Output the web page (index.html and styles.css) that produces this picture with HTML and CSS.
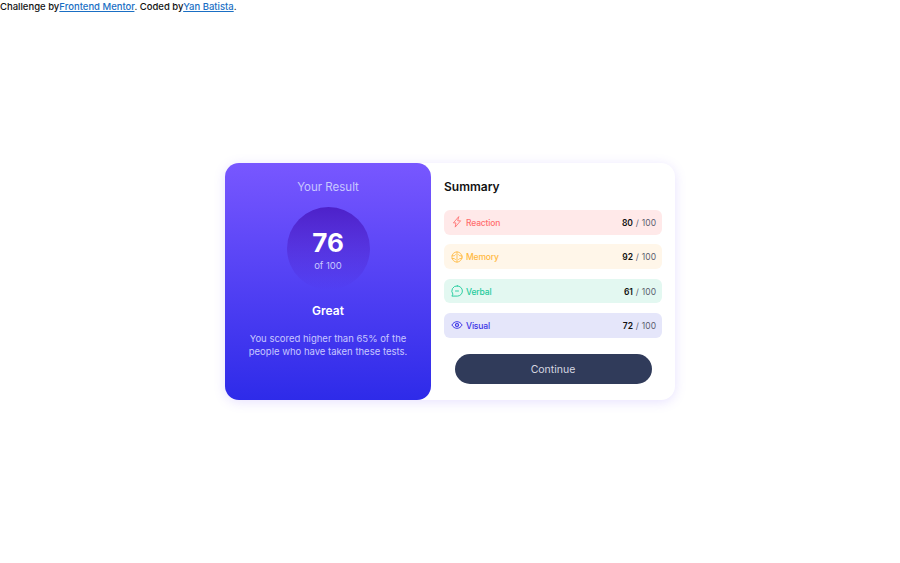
FILE: index.html
```html
<!DOCTYPE html>
<html lang="en">
<head>
    <meta charset="UTF-8">
    <meta name="viewport" content="width=device-width, initial-scale=1.0">
    <title>Results summary</title>
    <link rel="stylesheet" href="styles.css">
</head>
<body>
    <div class="attribution">Challenge by<a href="#">Frontend Mentor</a>. Coded by<a href="#">Yan Batista</a>.</div>

    <main class="page">
        <div class="card">
            <section class="result">
                <h1 class="result-title">Your Result</h1>
                <div class="score-circle">
                    <span class="score-value">76</span>
                    <span class="score-of">of 100</span>
                </div>
                <h2 class="result-grade">Great</h2>
                <p class="result-text">You scored higher than 65% of the people who have taken these tests.</p>
            </section>

            <section class="summary">
                <h2 class="summary-title">Summary</h2>

                <div class="row row-reaction">
                    <span class="row-label">
                        <svg class="row-icon" viewBox="0 0 20 20" fill="none" stroke="currentColor" stroke-width="1.4" stroke-linejoin="round" stroke-linecap="round">
                            <path d="M12.500 1.500 4 11.500h4.200L7 18.500l9-10.500h-4.200z"/>
                        </svg>
                        Reaction
                    </span>
                    <span class="row-score"><b>80</b> / 100</span>
                </div>

                <div class="row row-memory">
                    <span class="row-label">
                        <svg class="row-icon" viewBox="0 0 20 20" fill="none" stroke="currentColor" stroke-width="1.4" stroke-linecap="round">
                            <circle cx="10" cy="10" r="8.500"/>
                            <path d="M10 1.500v17M2 8h3.500L7.500 6M2 12.500h3.500l2 2M18 8h-3.500l-2-2M18 12.500h-3.500l-2 2"/>
                        </svg>
                        Memory
                    </span>
                    <span class="row-score"><b>92</b> / 100</span>
                </div>

                <div class="row row-verbal">
                    <span class="row-label">
                        <svg class="row-icon" viewBox="0 0 20 20" fill="none" stroke="currentColor" stroke-width="1.500" stroke-linecap="round" stroke-linejoin="round">
                            <path d="M10.500 1.500a8.500 8.500 0 0 1 0 17H1.500l1.700-3.300A8.500 8.500 0 0 1 10.500 1.500z"/>
                            <path d="M7.500 10h5"/>
                        </svg>
                        Verbal
                    </span>
                    <span class="row-score"><b>61</b> / 100</span>
                </div>

                <div class="row row-visual">
                    <span class="row-label">
                        <svg class="row-icon" viewBox="0 0 20 20" fill="none" stroke="currentColor" stroke-width="1.600" stroke-linejoin="round">
                            <path d="M1.500 10C3.500 6.500 6.500 4.500 10 4.500s6.500 2 8.500 5.500c-2 3.500-5 5.500-8.500 5.500s-6.500-2-8.500-5.500z"/>
                            <circle cx="10" cy="10" r="2.500" stroke-width="2"/>
                        </svg>
                        Visual
                    </span>
                    <span class="row-score"><b>72</b> / 100</span>
                </div>

                <button class="continue">Continue</button>
            </section>
        </div>
    </main>
</body>
</html>
```

FILE: styles.css
```css
* {
    box-sizing: border-box;
}
body {
    margin: 0;
    font-family: Inter, 'Noto Sans', sans-serif;
    background-color: #fff;
    color: #111;
}
.attribution {
    height: 13px;
    font-size: 9.500px;
    font-weight: 500;
    line-height: 13px;
    color: #111;
}
.attribution a {
    color: #1a6fc4;
}
.page {
    height: 550px;
    padding-bottom: 13px;
    display: flex;
    align-items: center;
    justify-content: center;
}
.card {
    width: 450px;
    height: 237px;
    display: flex;
    border-radius: 14px;
    background-color: #fff;
    box-shadow: 0 2px 12px rgba(120, 87, 255, 0.18);
}
.result {
    width: 206px;
    flex-shrink: 0;
    display: flex;
    flex-direction: column;
    align-items: center;
    padding: 17px 20px 0;
    border-radius: 14px;
    background: linear-gradient(180deg, #7857ff, #2e2be9);
    color: #fff;
    text-align: center;
}
.result-title {
    margin: 0;
    font-size: 11.500px;
    line-height: 15px;
    font-weight: 400;
    color: #c8c7ff;
}
.score-circle {
    width: 83px;
    height: 83px;
    margin-top: 12px;
    display: flex;
    flex-direction: column;
    align-items: center;
    padding-top: 21px;
    border-radius: 50%;
    background: linear-gradient(180deg, #4d21c9, rgba(37, 33, 201, 0));
}
.score-value {
    font-size: 26px;
    line-height: 29px;
    font-weight: 700;
}
.score-of {
    margin-top: 2px;
    font-size: 9.500px;
    line-height: 13px;
    color: #c8c7ff;
}
.result-grade {
    margin: 13px 0 0;
    font-size: 12px;
    line-height: 16px;
    font-weight: 600;
}
.result-text {
    margin: 13px 0 0;
    font-size: 9.500px;
    line-height: 13px;
    color: #c8c7ff;
}
.summary {
    flex: 1;
    padding: 16px 13px 0;
}
.summary-title {
    margin: 0 0 16px;
    font-size: 12px;
    line-height: 15px;
    font-weight: 600;
    color: #111;
}
.row {
    height: 24.700px;
    margin-bottom: 9.700px;
    padding: 1px 6px 0 7px;
    display: flex;
    align-items: center;
    justify-content: space-between;
    border-radius: 6px;
    font-size: 8.500px;
}
.row-label {
    display: flex;
    align-items: center;
    gap: 3px;
    font-weight: 500;
    letter-spacing: -0.15px;
}
.row-icon {
    width: 12px;
    height: 12px;
    margin-top: -1px;
}
.row-score {
    color: #5c5f70;
    word-spacing: 0.5px;
}
.row-score b {
    color: #111;
    font-weight: 600;
}
.row-reaction {
    background-color: #ffe9e9;
}
.row-reaction .row-label {
    color: #ff6f6f;
}
.row-memory {
    background-color: #fff6e9;
}
.row-memory .row-label {
    color: #ffb93f;
}
.row-verbal {
    background-color: #e3f8f1;
}
.row-verbal .row-label {
    color: #1dcb9c;
}
.row-visual {
    background-color: #e5e6fa;
}
.row-visual .row-label {
    color: #3a32e6;
}
.continue {
    display: block;
    width: 197px;
    height: 30.500px;
    margin: 16px auto 0;
    border: none;
    border-radius: 16px;
    background-color: #303b5a;
    color: #d5d7e0;
    font-family: Inter, 'Noto Sans', sans-serif;
    font-size: 10.500px;
    cursor: pointer;
}
```
